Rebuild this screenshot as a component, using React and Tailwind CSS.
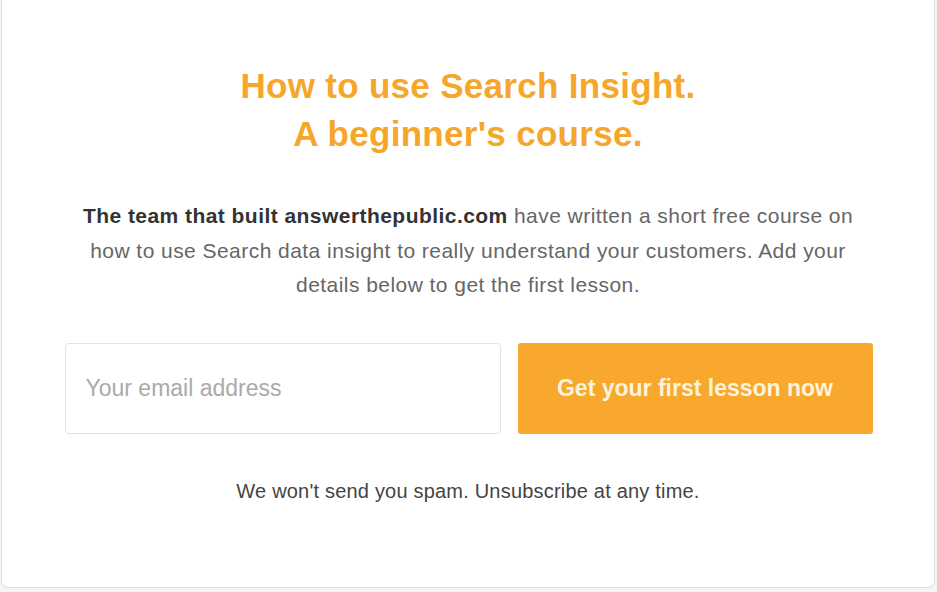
export default function App() {
  return (
    <div className="w-[937px] h-[592px] bg-[#f4f4f4] overflow-hidden relative" style={{ fontFamily: '"Liberation Sans", Arial, sans-serif' }}>
      <div className="absolute left-[1px] right-[2px] top-[-10px] h-[598px] bg-white border border-[#dcdcdc] rounded-[7px]">
        <div className="flex flex-col items-center pt-[71px]">
          <h1 className="text-[35px] leading-[48px] tracking-[0.3px] font-bold text-[#f5a62b] text-center">
            How to use Search Insight.
            <br />
            A beginner's course.
          </h1>
          <p className="mt-[41px] w-[790px] text-center text-[21px] leading-[34.5px] tracking-[0.45px] text-[#666666]">
            <span className="font-bold text-[#333333]">The team that built answerthepublic.com</span> have written a short free course on how to use Search data insight to really understand your customers. Add your details below to get the first lesson.
          </p>
          <div className="mt-[40px] flex gap-[17px] w-[808px] ml-[1px]">
            <div className="w-[436px] h-[91px] border border-[#e2e2e2] rounded-[4px] flex items-center px-[20px] text-[23px] text-[#aaaaaa]">
              Your email address
            </div>
            <button className="w-[355px] h-[91px] bg-[#f8a82c] rounded-[3px] text-[23px] font-bold text-[#fdf3dc]">
              Get your first lesson now
            </button>
          </div>
          <p className="mt-[45px] text-[20px] leading-[24px] tracking-[0.2px] text-[#444444]">
            We won't send you spam. Unsubscribe at any time.
          </p>
        </div>
      </div>
    </div>
  );
}
